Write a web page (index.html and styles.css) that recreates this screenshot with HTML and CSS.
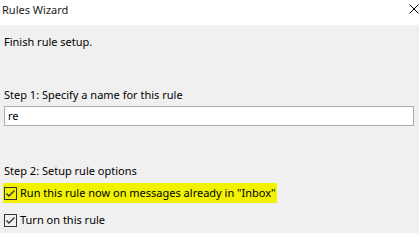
FILE: index.html
```html
<!DOCTYPE html>
<html>
<head>
<meta charset="utf-8">
<link rel="stylesheet" href="styles.css">
</head>
<body>
<div class="dialog">
  <div class="titlebar">
    <span class="title">Rules Wizard</span>
    <svg class="close" width="10" height="10" viewBox="0 0 10 10"><path d="M0.5 0.5 L9.5 9.5 M9.5 0.5 L0.5 9.5" stroke="#000" stroke-width="1" fill="none"/></svg>
  </div>
  <div class="body">
    <div class="intro">Finish rule setup.</div>
    <div class="step1">Step 1: Specify a name for this rule</div>
    <div class="input">re</div>
    <div class="step2">Step 2: Setup rule options</div>
    <div class="check hl">
      <span class="box"><svg width="11" height="11" viewBox="0 0 11 11"><path d="M1.5 5.5 L4 8 L9.5 2.5" stroke="#333" stroke-width="1.4" fill="none"/></svg></span>
      <span class="label">Run this rule now on messages already in "Inbox"</span>
    </div>
    <div class="check">
      <span class="box"><svg width="11" height="11" viewBox="0 0 11 11"><path d="M1.5 5.5 L4 8 L9.5 2.5" stroke="#333" stroke-width="1.4" fill="none"/></svg></span>
      <span class="label">Turn on this rule</span>
    </div>
  </div>
</div>
</body>
</html>
```
FILE: styles.css
```css
html, body {
  margin: 0;
  padding: 0;
  width: 419px;
  height: 233px;
  overflow: hidden;
}
body {
  font-family: "Noto Sans", "Open Sans", sans-serif;
  font-size: 11px;
  color: #000;
}
.dialog {
  display: flex;
  flex-direction: column;
  height: 233px;
}
.titlebar {
  height: 25px;
  background: #fff;
  display: flex;
  align-items: flex-start;
  justify-content: space-between;
}
.title {
  margin: 2px 0 0 2px;
  line-height: 16px;
  color: #1a1a1a;
}
.close {
  margin: 4px 0 0 0;
}
.body {
  flex: 1;
  background: #f0f0f0;
  display: flex;
  flex-direction: column;
  padding: 0 5px 0 4px;
}
.intro {
  margin-top: 9px;
  line-height: 16px;
}
.step1 {
  margin-top: 37px;
  line-height: 16px;
}
.input {
  margin-top: 3px;
  height: 18px;
  border: 1px solid #adadad;
  background: #fff;
  line-height: 18px;
  padding-left: 3px;
}
.step2 {
  margin-top: 37px;
  line-height: 16px;
}
.check {
  display: flex;
  align-items: center;
  align-self: flex-start;
  height: 18px;
}
.check.hl {
  margin-top: 4px;
  height: 20px;
  background: #f2f200;
  margin-left: -1px;
  padding-left: 1px;
  padding-right: 1px;
}
.check + .check {
  margin-top: 8px;
}
.box {
  width: 11px;
  height: 11px;
  border: 1px solid #333;
  background: transparent;
  display: flex;
  align-items: center;
  justify-content: center;
  margin-right: 3px;
}
.box svg {
  display: block;
}
.label {
  line-height: 16px;
}
```
